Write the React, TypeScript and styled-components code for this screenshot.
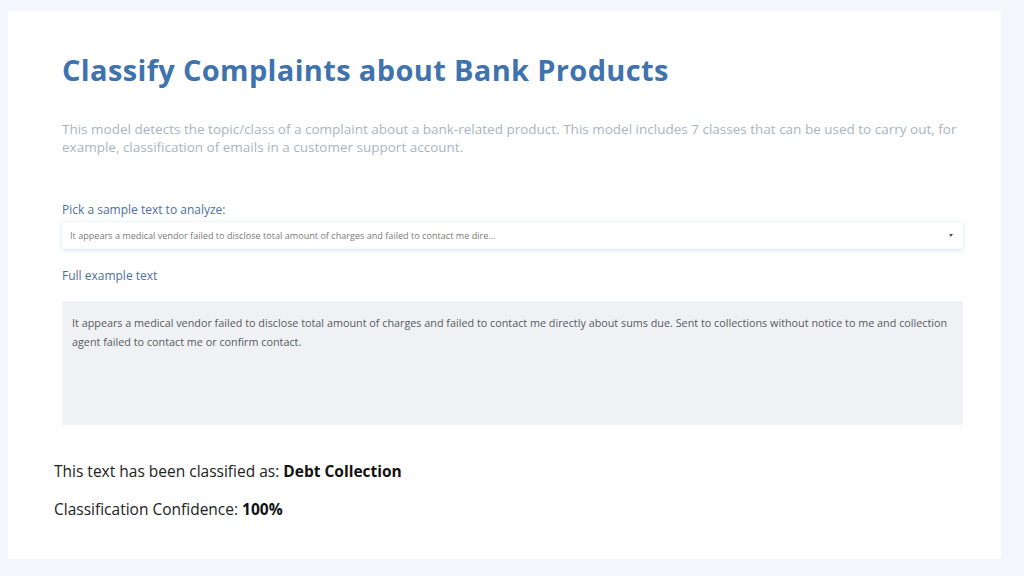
import React from "react";
import styled, { createGlobalStyle } from "styled-components";

const Global = createGlobalStyle`
  html, body { margin: 0; padding: 0; background: #f3f7fb; }
  body { font-family: "Open Sans", "Liberation Sans", sans-serif; }
  * { box-sizing: border-box; }
`;

const Page = styled.div`
  width: 1024px;
  height: 576px;
  padding: 11px 23px 17px 8px;
  background: #f3f7fb;
`;

const Card = styled.div`
  height: 100%;
  background: #ffffff;
  padding: 0 38px 0 46px;
  display: flex;
  flex-direction: column;
`;

const Main = styled.div`
  padding: 0 0 0 8px;
  display: flex;
  flex-direction: column;
`;

const Title = styled.h1`
  margin: 41px 0 0;
  font-size: 29px;
  line-height: 36px;
  font-weight: 700;
  color: #3f73ae;
  letter-spacing: 0.35px;
`;

const Desc = styled.p`
  margin: 32px 0 0;
  font-size: 13.5px;
  line-height: 18px;
  color: #aab4c3;
  font-weight: 400;
`;

const Label = styled.div<{ $mt: number }>`
  margin-top: ${(p) => p.$mt}px;
  font-size: 12px;
  line-height: 14px;
  color: #4b70a3;
`;

const Select = styled.div`
  margin-top: 5px;
  height: 27px;
  background: #ffffff;
  border-radius: 2px;
  box-shadow: 0 1px 4px rgba(120, 170, 220, 0.35);
  display: flex;
  align-items: center;
  justify-content: space-between;
  padding: 0 10px 0 8px;
  font-size: 9.1px;
  color: #7a7a7a;
`;

const Caret = styled.span`
  width: 0;
  height: 0;
  border-left: 2.5px solid transparent;
  border-right: 2.5px solid transparent;
  border-top: 3px solid #555;
`;

const TextArea = styled.div`
  margin-top: 18px;
  height: 124px;
  background: #f0f1f5;
  border-radius: 2px;
  padding: 12px 10px;
  font-size: 10.8px;
  line-height: 19px;
  color: #555a60;
`;

const Result = styled.p<{ $mt: number }>`
  margin: ${(p) => p.$mt}px 0 0;
  font-size: 15.5px;
  line-height: 18px;
  color: #222;
  b { font-weight: 700; color: #111; }
`;

export default function App() {
  return (
    <>
      <Global />
      <Page>
        <Card>
          <Main>
            <Title>Classify Complaints about Bank Products</Title>
            <Desc>
              This model detects the topic/class of a complaint about a bank-related product. This model includes 7 classes that can be used to carry out, for example, classification of emails in a customer support account.
            </Desc>
            <Label $mt={47}>Pick a sample text to analyze:</Label>
            <Select>
              <span>It appears a medical vendor failed to disclose total amount of charges and failed to contact me dire...</span>
              <Caret />
            </Select>
            <Label $mt={20}>Full example text</Label>
            <TextArea>
              It appears a medical vendor failed to disclose total amount of charges and failed to contact me directly about sums due. Sent to collections without notice to me and collection agent failed to contact me or confirm contact.
            </TextArea>
          </Main>
          <Result $mt={37}>
            This text has been classified as: <b>Debt Collection</b>
          </Result>
          <Result $mt={20}>
            Classification Confidence: <b>100%</b>
          </Result>
        </Card>
      </Page>
    </>
  );
}
